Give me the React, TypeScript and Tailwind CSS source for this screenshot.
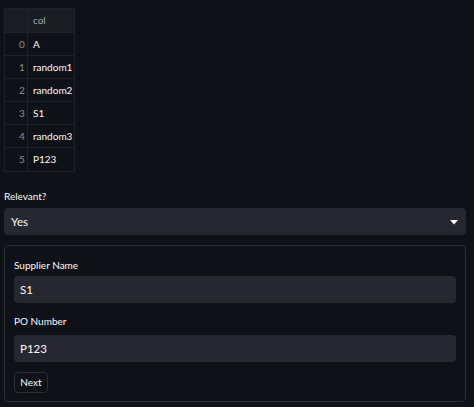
export default function App() {
  // rows of the little dataframe
  const rows = ['A', 'random1', 'random2', 'S1', 'random3', 'P123'];

  return (
    <div className="w-full h-[407px] bg-[#0e1117] text-[#fafafa] px-[4px] pt-[8px] font-['Lato','Noto_Sans',sans-serif] overflow-hidden">
      {/* Dataframe */}
      <div className="w-[71px] border border-[#1f2128] text-[10px]">
        <div className="flex h-[24px] bg-[#1a1c24] border-b border-[#1f2128]">
          <div className="w-[23px] shrink-0 border-r border-[#1f2128]" />
          <div className="flex-1 flex items-center pl-[5px] text-[#a3a8b4]">col</div>
        </div>
        {rows.map((value, index) => (
          <div key={index} className="flex h-[23px] border-b border-[#1f2128] last:border-b-0">
            <div className="w-[23px] shrink-0 border-r border-[#1f2128] flex items-center pl-[14px] text-[#8b8f9a]">
              <span>{index}</span>
            </div>
            <div className="flex-1 flex items-center pl-[5px]">{value}</div>
          </div>
        ))}
      </div>

      {/* Select */}
      <div className="mt-[16px] text-[10px] leading-[14px] h-[20px] flex items-start pt-[1px]">Relevant?</div>
      <div className="mr-[4px] h-[27px] rounded-[4px] bg-[#262730] flex items-center justify-between pl-[7px] pr-[8px] text-[11.5px]">
        <span>Yes</span>
        <svg width="8" height="5" viewBox="0 0 8 5" className="mt-[1px]">
          <path d="M0 0 L8 0 L4 4.5 Z" fill="#fafafa" />
        </svg>
      </div>

      {/* Form */}
      <div className="mt-[10px] mr-[4px] h-[157px] border border-[#2b2d35] rounded-[4px] px-[9px] pt-[12px]">
        <div className="text-[10px] leading-[14px] h-[18px]">Supplier Name</div>
        <div className="h-[27px] rounded-[4px] bg-[#262730] flex items-center px-[6px] text-[11.5px]">S1</div>
        <div className="mt-[10px] text-[10px] leading-[14px] h-[22px] flex items-start pt-[1px]">PO Number</div>
        <div className="h-[27px] rounded-[4px] bg-[#262730] flex items-center px-[6px] text-[11.5px]">P123</div>
        <button className="mt-[10px] h-[21px] w-[34px] rounded-[4px] border border-[#2b2d35] bg-[#0e1117] text-[10px] flex items-center justify-center">
          Next
        </button>
      </div>
    </div>
  );
}
